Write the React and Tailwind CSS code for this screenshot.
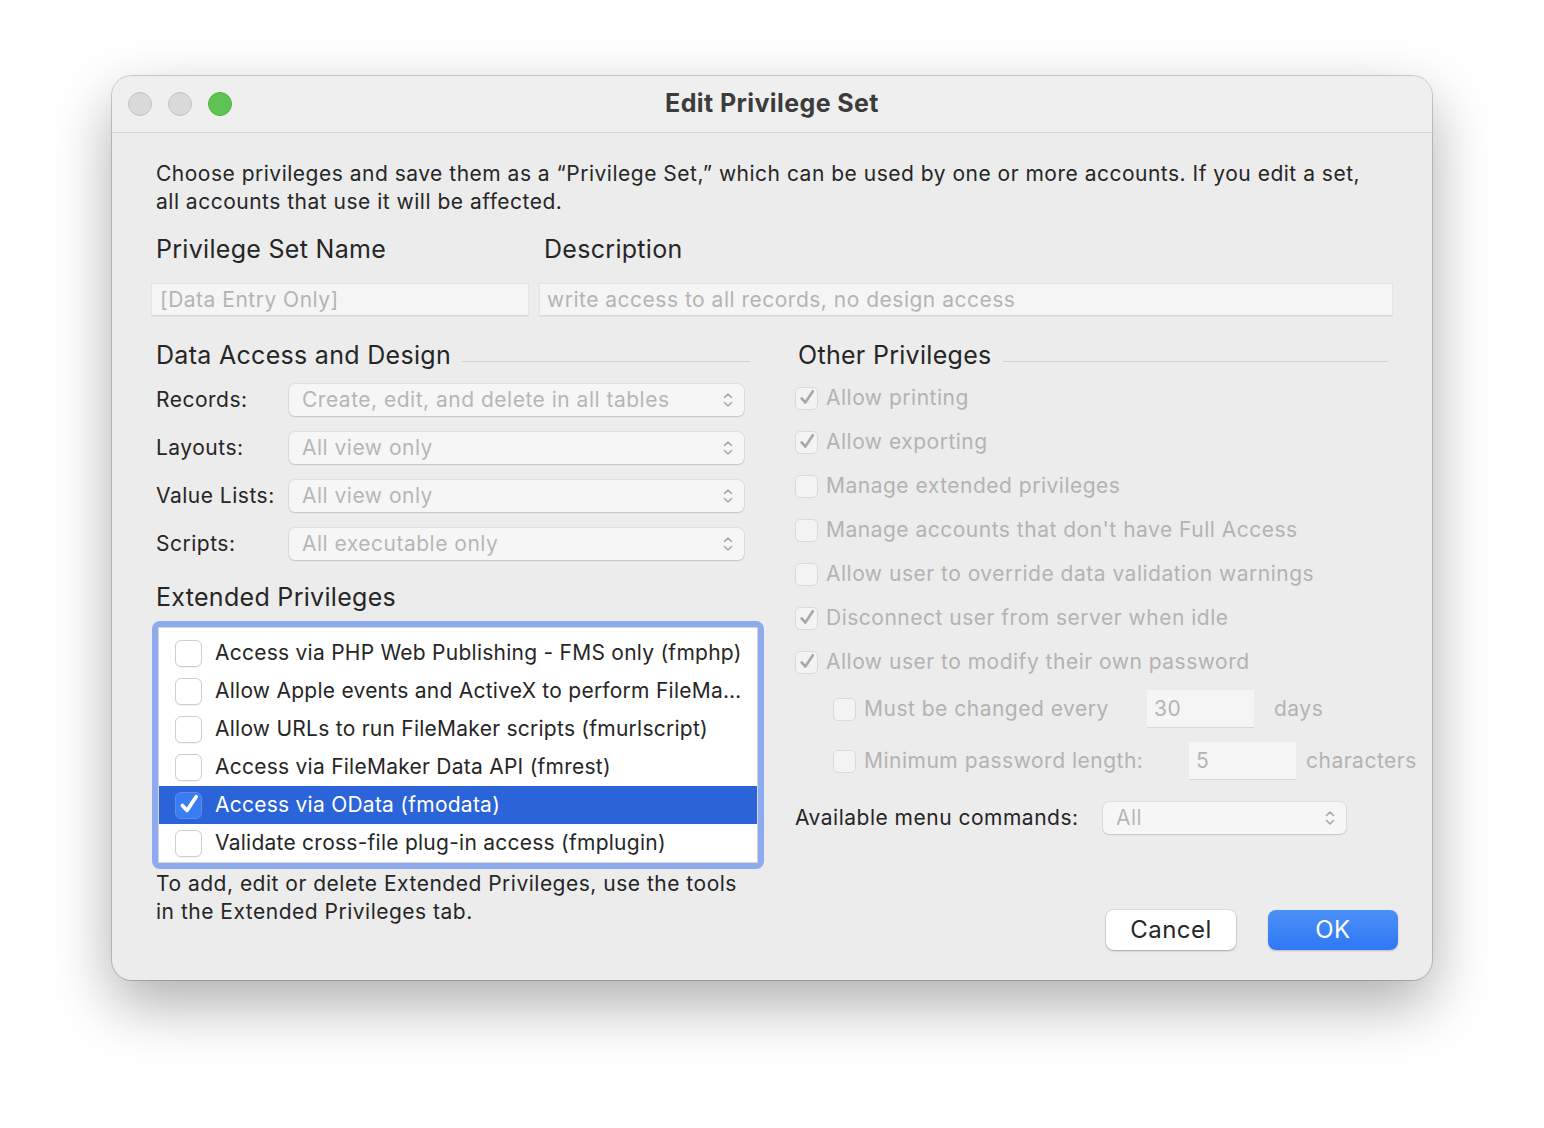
import React from 'react';

const FONT = { fontFamily: 'Inter, "Noto Sans", sans-serif' };

const Check = ({ color = '#ffffff', size = 20, width = 3.2 }) => (
  <svg width={size} height={size} viewBox="0 0 20 20" fill="none">
    <path d="M4 10.5 L8.2 15 L16.5 2.5" stroke={color} strokeWidth={width} strokeLinecap="round" strokeLinejoin="round" />
  </svg>
);

const Chevrons = () => (
  <svg width="12" height="18" viewBox="0 0 12 18" fill="none">
    <path d="M2.5 6.5 L6 3 L9.5 6.5" stroke="#a8a8a8" strokeWidth="1.6" strokeLinecap="round" strokeLinejoin="round" />
    <path d="M2.5 11.5 L6 15 L9.5 11.5" stroke="#a8a8a8" strokeWidth="1.6" strokeLinecap="round" strokeLinejoin="round" />
  </svg>
);

const Popup = ({ value, className = '' }) => (
  <div className={`flex h-[32px] items-center justify-between rounded-[6px] bg-[#f6f6f6] pl-[13px] pr-[10px] shadow-[0_0_0_1px_rgba(0,0,0,0.05),0_1px_1.5px_rgba(0,0,0,0.12)] ${className}`}>
    <span className="text-[21px] text-[#b6b6b6] whitespace-nowrap">{value}</span>
    <Chevrons />
  </div>
);

const SectionHeading = ({ children, lineClass = '' }) => (
  <div className="flex h-[32px] items-center">
    <span className="text-[25px] leading-[32px] tracking-[0.3px] text-[#262626] whitespace-nowrap">{children}</span>
    <div className={`ml-[11px] mt-[12px] h-px flex-1 bg-[#d2d2d2] ${lineClass}`} />
  </div>
);

const DimCheckbox = ({ checked }) => (
  <div className="flex h-[23px] w-[23px] shrink-0 items-center justify-center rounded-[5px] border border-[#dadada] bg-[#f3f3f3]">
    {checked && <Check color="#a9a9a9" size={18} width={3} />}
  </div>
);

const extended = [
  'Access via PHP Web Publishing - FMS only (fmphp)',
  'Allow Apple events and ActiveX to perform FileMa…',
  'Allow URLs to run FileMaker scripts (fmurlscript)',
  'Access via FileMaker Data API (fmrest)',
  'Access via OData (fmodata)',
  'Validate cross-file plug-in access (fmplugin)',
];

const others = [
  ['Allow printing', true],
  ['Allow exporting', true],
  ['Manage extended privileges', false],
  ["Manage accounts that don't have Full Access", false],
  ['Allow user to override data validation warnings', false],
  ['Disconnect user from server when idle', true],
  ['Allow user to modify their own password', true],
];

const dataRows = [
  ['Records:', 'Create, edit, and delete in all tables'],
  ['Layouts:', 'All view only'],
  ['Value Lists:', 'All view only'],
  ['Scripts:', 'All executable only'],
];

export default function App() {
  return (
    <div className="h-[1128px] w-[1544px] bg-white pl-[112px] pt-[76px] tracking-[0.5px]" style={FONT}>
      <div className="h-[904px] w-[1320px] overflow-hidden rounded-[20px] bg-[#ececec] shadow-[0_0_0_1px_rgba(0,0,0,0.18),0_24px_60px_rgba(0,0,0,0.32)]">
        {/* Title bar */}
        <div className="grid h-[57px] grid-cols-[1fr_auto_1fr] items-center border-b border-[#d3d3d3] bg-[#efefef]">
          <div className="flex items-center gap-[16px] pl-[16px]">
            <div className="h-[24px] w-[24px] rounded-full border border-[#c3c3c3] bg-[#d9d9d9]" />
            <div className="h-[24px] w-[24px] rounded-full border border-[#c3c3c3] bg-[#d9d9d9]" />
            <div className="h-[24px] w-[24px] rounded-full border border-[#52b046] bg-[#60c454]" />
          </div>
          <div className="text-[25px] font-bold tracking-[0.4px] text-[#3c3c3c]">Edit Privilege Set</div>
          <div />
        </div>

        {/* Body */}
        <div className="px-[40px] pt-[27px] text-[#262626]">
          <p className="whitespace-nowrap pl-1 text-[21px] leading-[28px]">
            Choose privileges and save them as a “Privilege Set,” which can be used by one or more accounts. If you edit a set,
            <br />
            all accounts that use it will be affected.
          </p>

          <div className="mt-[17px] grid grid-cols-[376px_1fr] gap-x-[12px]">
            <div className="pl-1 text-[25px] leading-[32px] tracking-[0.3px]">Privilege Set Name</div>
            <div className="pl-1 text-[25px] leading-[32px] tracking-[0.3px]">Description</div>
          </div>

          <div className="mt-[19px] grid grid-cols-[376px_1fr] gap-x-[12px]">
            <div className="flex h-[32px] items-center border-b border-[#d8d8d8] bg-[#f5f5f5] pl-[8px] text-[21px] text-[#b4b4b4] shadow-[0_0_0_1px_rgba(0,0,0,0.03)]">
              [Data Entry Only]
            </div>
            <div className="flex h-[32px] items-center border-b border-[#d8d8d8] bg-[#f5f5f5] pl-[7px] text-[21px] text-[#b4b4b4] shadow-[0_0_0_1px_rgba(0,0,0,0.03)]">
              write access to all records, no design access
            </div>
          </div>

          <div className="mt-[23px] flex">
            {/* Left column */}
            <div className="w-[612px] shrink-0">
              <div className="pl-1">
                <SectionHeading lineClass="mr-[14px]">Data Access and Design</SectionHeading>
              </div>
              <div className="mt-[13px] flex flex-col gap-[16px]">
                {dataRows.map(([label, value]) => (
                  <div key={label} className="flex h-[32px] items-center">
                    <div className="w-[137px] pl-1 text-[21px]">{label}</div>
                    <Popup value={value} className="w-[455px]" />
                  </div>
                ))}
              </div>

              <div className="mt-[21px] pl-1 text-[25px] leading-[32px] tracking-[0.3px]">Extended Privileges</div>

              <div className="mt-[8px] h-[248px] rounded-[8px] border-[6px] border-[#8daaec]">
                <div className="h-full border border-[#d4d4d4] bg-white pt-[6px]">
                  {extended.map((item, i) => {
                    const selected = i === 4;
                    return (
                      <div
                        key={item}
                        className={`flex h-[38px] items-center pl-[16px] ${selected ? 'bg-[#2b63d9] text-white' : 'text-[#262626]'}`}
                      >
                        {selected ? (
                          <div className="flex h-[27px] w-[27px] shrink-0 items-center justify-center rounded-[6px] border border-[#5d8de8] bg-[#3a7cf2]">
                            <Check size={22} width={3.4} />
                          </div>
                        ) : (
                          <div className="h-[27px] w-[27px] shrink-0 rounded-[6px] border border-[#cfcfcf] bg-white shadow-[0_1px_1px_rgba(0,0,0,0.06)]" />
                        )}
                        <span className="ml-[13px] whitespace-nowrap text-[21px] tracking-[0.25px]">{item}</span>
                      </div>
                    );
                  })}
                </div>
              </div>

              <p className="pl-1 pt-[1px] text-[21px] leading-[28px]">
                To add, edit or delete Extended Privileges, use the tools
                <br />
                in the Extended Privileges tab.
              </p>
            </div>

            {/* Right column */}
            <div className="ml-[31px] w-[597px] shrink-0">
              <div className="pl-[3px]">
                <SectionHeading lineClass="mr-[4px]">Other Privileges</SectionHeading>
              </div>

              <div className="mt-[5px]">
                {others.map(([label, checked]) => (
                  <div key={label} className="flex h-[44px] items-center">
                    <DimCheckbox checked={checked} />
                    <span className="ml-[8px] whitespace-nowrap text-[21px] text-[#b3b3b3]">{label}</span>
                  </div>
                ))}
              </div>

              <div className="flex h-[50px] items-center pl-[38px]">
                <DimCheckbox />
                <span className="ml-[8px] w-[283px] shrink-0 whitespace-nowrap text-[21px] text-[#b3b3b3]">Must be changed every</span>
                <div className="flex h-[38px] w-[107px] shrink-0 items-center border-b border-[#d8d8d8] bg-[#f5f5f5] pl-[7px] text-[21px] text-[#b4b4b4]">30</div>
                <span className="ml-[20px] text-[21px] text-[#b3b3b3]">days</span>
              </div>

              <div className="flex h-[54px] items-center pl-[38px]">
                <DimCheckbox />
                <span className="ml-[8px] w-[325px] shrink-0 whitespace-nowrap text-[21px] text-[#b3b3b3]">Minimum password length:</span>
                <div className="flex h-[38px] w-[107px] shrink-0 items-center border-b border-[#d8d8d8] bg-[#f5f5f5] pl-[7px] text-[21px] text-[#b4b4b4]">5</div>
                <span className="ml-[10px] whitespace-nowrap text-[21px] text-[#b3b3b3]">characters</span>
              </div>

              <div className="mt-[14px] flex h-[32px] items-center">
                <span className="w-[308px] shrink-0 whitespace-nowrap text-[21px]">Available menu commands:</span>
                <Popup value="All" className="w-[243px]" />
              </div>

              <div className="-mr-[6px] mt-[76px] flex justify-end gap-[32px]">
                <button className="h-[40px] w-[130px] rounded-[8px] bg-white text-[24px] text-[#262626] shadow-[0_0_0_1px_rgba(0,0,0,0.06),0_1px_2px_rgba(0,0,0,0.25)]">
                  Cancel
                </button>
                <button className="h-[40px] w-[130px] rounded-[8px] bg-gradient-to-b from-[#4b90f8] to-[#2f77f5] text-[24px] text-white shadow-[0_1px_2px_rgba(0,0,0,0.2)]">
                  OK
                </button>
              </div>
            </div>
          </div>
        </div>
      </div>
    </div>
  );
}
